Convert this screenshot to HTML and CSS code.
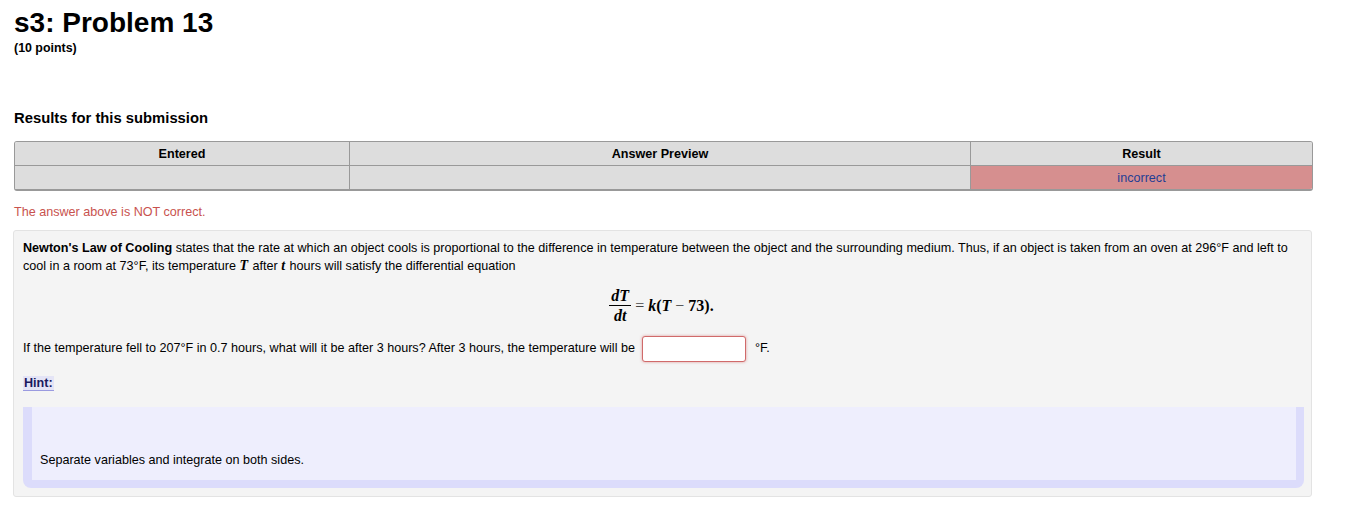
FILE: index.html
```html
<!DOCTYPE html>
<html>
<head>
<meta charset="utf-8">
<link rel="stylesheet" href="styles.css">
</head>
<body>
<div class="page">
  <h1 class="title">s3: Problem 13</h1>
  <div class="points">(10 points)</div>
  <h2 class="results-head">Results for this submission</h2>
  <table class="attempt">
    <tr>
      <th class="c1">Entered</th>
      <th class="c2">Answer Preview</th>
      <th class="c3">Result</th>
    </tr>
    <tr>
      <td class="c1"></td>
      <td class="c2"></td>
      <td class="c3 bad">incorrect</td>
    </tr>
  </table>
  <div class="notcorrect">The answer above is NOT correct.</div>
  <div class="problem">
    <p class="p1"><b>Newton's Law of Cooling</b> states that the rate at which an object cools is proportional to the difference in temperature between the object and the surrounding medium. Thus, if an object is taken from an oven at 296°F and left to cool in a room at 73°F, its temperature <i class="m">T</i> after <i class="m">t</i> hours will satisfy the differential equation</p>
    <div class="eq">
      <span class="frac"><span class="num">dT</span><span class="den">dt</span></span>
      <span class="rhs"><span class="op">=</span> <i>k</i>(<i>T</i> <span class="op">−</span> 73).</span>
    </div>
    <p class="q">If the temperature fell to 207°F in 0.7 hours, what will it be after 3 hours? After 3 hours, the temperature will be <input class="ans" type="text"> °F.</p>
    <div class="hint-label"><span>Hint:</span></div>
    <div class="hint">
      <div class="hint-body">Separate variables and integrate on both sides.</div>
    </div>
  </div>
</div>
</body>
</html>
```
FILE: styles.css
```css
html, body { margin: 0; padding: 0; background: #fff; }
body { font-family: "Liberation Sans", Arial, sans-serif; color: #000; }
.page { padding: 5px 55px 20px 14px; }
.title { font-size: 28px; font-weight: bold; margin: 0; line-height: 36px; }
.points { font-size: 12.4px; font-weight: bold; line-height: 15px; }
.results-head { font-size: 14.8px; font-weight: bold; margin: 53px 0 0 0; line-height: 18px; }
.attempt { width: 1299px; margin-top: 14px; border-collapse: separate; border-spacing: 0; border: 1px solid #999; border-bottom-width: 2px; border-radius: 3px; font-size: 12.6px; overflow: hidden; }
.attempt th, .attempt td { background: #ddd; height: 23px; padding: 0; text-align: center; border-left: 1px solid #999; }
.attempt th:first-child, .attempt td:first-child { border-left: 0; }
.attempt th { font-weight: bold; border-bottom: 1px solid #999; font-size: 12.6px; }
.attempt .c1 { width: 334px; }
.attempt .c2 { width: 620px; }
.attempt td.bad { background: #d68f8f; color: #1f3e94; }
.notcorrect { color: #c8524e; font-size: 12.6px; margin-top: 13px; line-height: 16px; }
.problem { margin: 10px 0 0 -1px; width: 1281px; background: #f4f4f4; border: 1px solid #e3e3e3; border-radius: 3px; padding: 8px 7px 8px 9px; font-size: 12.6px; line-height: 18px; }
.problem p { margin: 0; }
.m { font-family: "Liberation Serif", serif; font-style: italic; font-weight: bold; font-size: 14px; padding-right: 1px; }
.eq { display: flex; justify-content: center; align-items: center; margin: 13px 0 11px 0; font-family: "Liberation Serif", serif; font-weight: bold; font-size: 16px; padding-right: 4px; }
.frac { display: inline-flex; flex-direction: column; align-items: center; font-style: italic; margin-right: 4px; }
.frac .num { border-bottom: 1px solid #000; padding: 0 2px 2px; line-height: 15px; }
.frac .den { padding-top: 2px; line-height: 15px; }
.rhs i { font-style: italic; }
.op { font-weight: normal; color: #444; }
.q { line-height: 28px; }
.ans { width: 104px; height: 26px; box-sizing: border-box; border: 1px solid #d06a6a; border-radius: 3px; box-shadow: 0 0 3px rgba(208,90,90,0.6); vertical-align: middle; margin: 0 5px 0 4px; background: #fff; }
.hint-label { margin-top: 12px; font-weight: bold; color: #1a1a5e; }
.hint-label span { background: #e4e4f6; border-bottom: 1px solid #9a9ae0; padding: 0 1px; }
.hint { margin-top: 15px; background: #dcdcfb; padding: 0 8px 8px 9px; border-radius: 0 0 8px 8px; }
.hint-body { background: #eeeefd; padding: 44px 8px 11px 8px; line-height: 18px; }
```
